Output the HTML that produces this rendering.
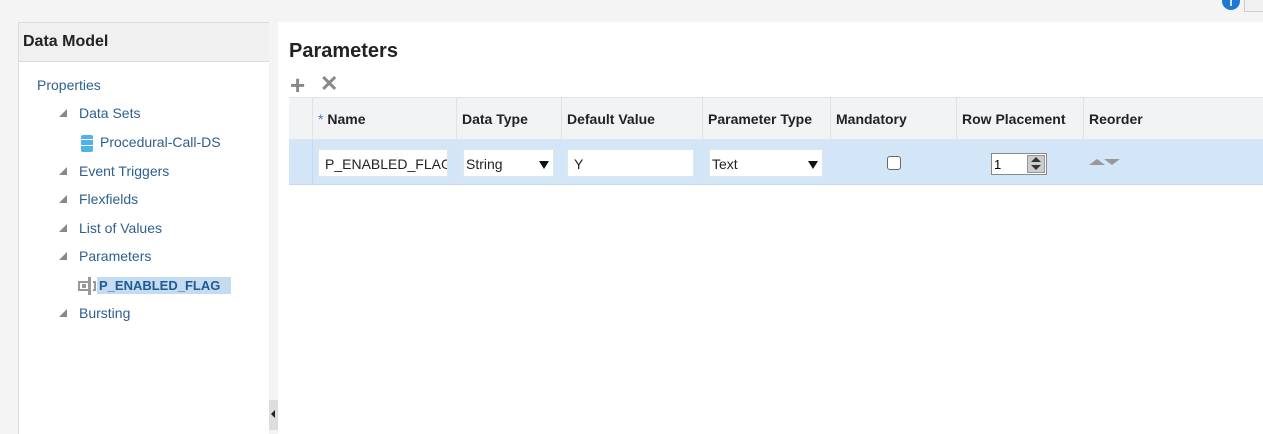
<!DOCTYPE html>
<html><head><style>
*{box-sizing:border-box;margin:0;padding:0}
html,body{width:1263px;height:434px;overflow:hidden}
body{background:#f4f4f4;font-family:"Liberation Sans",Arial,sans-serif;font-size:14px;position:relative}
.a{position:absolute}
.lp{left:18px;top:22px;width:252px;height:412px;background:#fff;border:1px solid #dcdcdc;border-bottom:none}
.lh{left:0;top:0;width:250px;height:39px;background:#f0f0f0;border-bottom:1px solid #dcdcdc;font-weight:bold;font-size:16px;color:#222;padding:10px 4px}
.t{color:#2d5f8f;font-size:14px}
.tri{width:0;height:0;border-left:8px solid transparent;border-bottom:8px solid #888}
.sp{left:269px;top:22px;width:9px;height:412px;background:#f4f4f4}
.rp{left:278px;top:22px;width:985px;height:412px;background:#fff}
.hd{left:289px;top:97px;width:974px;height:43px;background:#f1f3f5;border-top:1px solid #dfe3e8;border-bottom:1px solid #dfe3e8}
.row{left:289px;top:140px;width:974px;height:45px;background:#d3e6f8;border-bottom:1px solid #c7d9ea}
.hc{top:0;height:42px;border-left:1px solid #dde3e8;padding:13px 5px;font-weight:bold;color:#222;font-size:14px}
.inp{background:#fff;border:1px solid #e0e6ec;height:28px;top:9px;font-size:14px;padding:6px 6px;color:#222}
</style></head><body>
<div class="a" style="left:1222px;top:-8px;width:18px;height:18px;border-radius:50%;background:#1d7ad0;color:#fff;font-size:11px;font-weight:bold;text-align:center;line-height:22px">i</div>
<div class="a" style="left:1244px;top:-4px;width:20px;height:16px;background:#f0f0f0;border:1px solid #ccc"></div>
<div class="a lp">
 <div class="a lh">Data Model</div>
 <div class="a t" style="left:18px;top:54px">Properties</div>
 <div class="a tri" style="left:40px;top:86px"></div><div class="a t" style="left:60px;top:82px">Data Sets</div>
 <div class="a" style="left:62px;top:112px;width:12px;height:17px;background:linear-gradient(#4fb3ea 0 4px,#fff 4px 5px,#4fb3ea 5px 10px,#fff 10px 11px,#4fb3ea 11px);border-radius:2px"></div>
 <div class="a t" style="left:81px;top:111px">Procedural-Call-DS</div>
 <div class="a tri" style="left:40px;top:144px"></div><div class="a t" style="left:60px;top:140px">Event Triggers</div>
 <div class="a tri" style="left:40px;top:172px"></div><div class="a t" style="left:60px;top:168px">Flexfields</div>
 <div class="a tri" style="left:40px;top:201px"></div><div class="a t" style="left:60px;top:197px">List of Values</div>
 <div class="a tri" style="left:40px;top:229px"></div><div class="a t" style="left:60px;top:225px">Parameters</div>
 <div class="a" style="left:59px;top:258px;width:12px;height:10px;border:2px solid #999"></div>
 <div class="a" style="left:63px;top:261px;width:4px;height:4px;background:#999"></div>
 <div class="a" style="left:69px;top:254px;width:3px;height:18px;background:#999"></div>
 <div class="a" style="left:74px;top:258px;width:3px;height:10px;border:2px solid #999;border-left:none"></div>
 <div class="a t" style="left:78px;top:254px;width:134px;height:17px;background:#c5dcf0;font-weight:bold;font-size:13px;padding:1px 2px;color:#1f5a92">P_ENABLED_FLAG</div>
 <div class="a tri" style="left:40px;top:286px"></div><div class="a t" style="left:60px;top:282px">Bursting</div>
</div>
<div class="a sp"></div>
<div class="a" style="left:269px;top:400px;width:9px;height:30px;background:#ddd"></div>
<div class="a" style="left:271px;top:410px;border-right:4px solid #222;border-top:4px solid transparent;border-bottom:4px solid transparent"></div>
<div class="a rp"></div>
<div class="a" style="left:289px;top:40px;font-size:20px;font-weight:bold;color:#222">Parameters</div>
<div class="a" style="left:290px;top:75px;font-size:26px;font-weight:bold;color:#888;line-height:20px">+</div>
<div class="a" style="left:320px;top:74px;font-size:22px;font-weight:bold;color:#888;line-height:20px">✕</div>
<div class="a hd">
 <div class="a hc" style="left:23px;width:144px"><span style="color:#3a7cc0;font-weight:normal">*</span> Name</div>
 <div class="a hc" style="left:167px;width:105px">Data Type</div>
 <div class="a hc" style="left:272px;width:141px">Default Value</div>
 <div class="a hc" style="left:413px;width:128px">Parameter Type</div>
 <div class="a hc" style="left:541px;width:126px">Mandatory</div>
 <div class="a hc" style="left:667px;width:127px">Row Placement</div>
 <div class="a hc" style="left:794px;width:180px">Reorder</div>
</div>
<div class="a row">
 <div class="a" style="left:23px;top:0;height:44px;border-left:1px solid #c7d9ea"></div>
 <div class="a inp" style="left:29px;width:130px;overflow:hidden;white-space:nowrap">P_ENABLED_FLAG</div>
 <div class="a inp" style="left:174px;width:91px;padding-left:2px">String<span class="a" style="right:4px;top:11px;border-top:8px solid #111;border-left:5px solid transparent;border-right:5px solid transparent"></span></div>
 <div class="a inp" style="left:278px;width:127px">Y</div>
 <div class="a inp" style="left:420px;width:114px;padding-left:2px">Text<span class="a" style="right:4px;top:11px;border-top:8px solid #111;border-left:5px solid transparent;border-right:5px solid transparent"></span></div>
 <div class="a" style="left:598px;top:16px;width:14px;height:14px;border:1px solid #666;border-radius:3px;background:#fff"></div>
 <div class="a" style="left:702px;top:13px;width:56px;height:22px;border:1px solid #888;background:#fff;font-size:13px;padding:3px 2px">1</div>
 <div class="a" style="left:738px;top:15px;width:18px;height:18px;background:#ccc;border:1px solid #999"></div>
 <div class="a" style="left:742px;top:17px;border-bottom:5px solid #333;border-left:5px solid transparent;border-right:5px solid transparent"></div>
 <div class="a" style="left:742px;top:25px;border-top:5px solid #333;border-left:5px solid transparent;border-right:5px solid transparent"></div>
 <div class="a" style="left:800px;top:19px;border-bottom:6px solid #999;border-left:8px solid transparent;border-right:8px solid transparent"></div>
 <div class="a" style="left:815px;top:19px;border-top:6px solid #999;border-left:8px solid transparent;border-right:8px solid transparent"></div>
</div>
</body></html>
